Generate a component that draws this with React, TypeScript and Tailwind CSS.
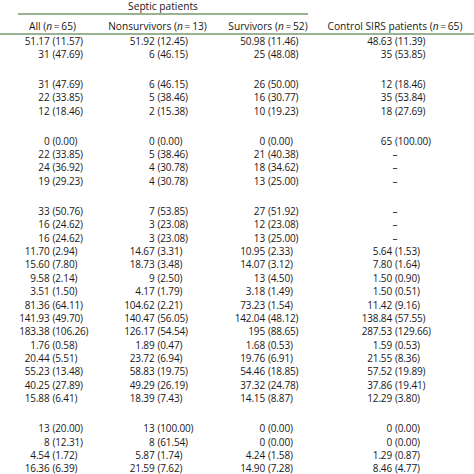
// Septic vs control SIRS patients: descriptive table, values as mean (SD) or n (%).
// Each column is aligned on the opening parenthesis, headers centre over it.

const WIDTHS = ["w-[105px]", "w-[105px]", "w-[116px]", "w-[138px]"];
const FONT = "font-['Open_Sans','Noto_Sans',sans-serif]";
const LINE = "bg-[#98b391]";

// null marks the gap before a new block of rows
const ROWS: (string[] | null)[] = [
  ["51.17 (11.57)", "51.92 (12.45)", "50.98 (11.46)", "48.63 (11.39)"],
  ["31 (47.69)", "6 (46.15)", "25 (48.08)", "35 (53.85)"],
  null,
  ["31 (47.69)", "6 (46.15)", "26 (50.00)", "12 (18.46)"],
  ["22 (33.85)", "5 (38.46)", "16 (30.77)", "35 (53.84)"],
  ["12 (18.46)", "2 (15.38)", "10 (19.23)", "18 (27.69)"],
  null,
  ["0 (0.00)", "0 (0.00)", "0 (0.00)", "65 (100.00)"],
  ["22 (33.85)", "5 (38.46)", "21 (40.38)", "–"],
  ["24 (36.92)", "4 (30.78)", "18 (34.62)", "–"],
  ["19 (29.23)", "4 (30.78)", "13 (25.00)", "–"],
  null,
  ["33 (50.76)", "7 (53.85)", "27 (51.92)", "–"],
  ["16 (24.62)", "3 (23.08)", "12 (23.08)", "–"],
  ["16 (24.62)", "3 (23.08)", "13 (25.00)", "–"],
  ["11.70 (2.94)", "14.67 (3.31)", "10.95 (2.33)", "5.64 (1.53)"],
  ["15.60 (7.80)", "18.73 (3.48)", "14.07 (3.12)", "7.80 (1.64)"],
  ["9.58 (2.14)", "9 (2.50)", "13 (4.50)", "1.50 (0.90)"],
  ["3.51 (1.50)", "4.17 (1.79)", "3.18 (1.49)", "1.50 (0.51)"],
  ["81.36 (64.11)", "104.62 (2.21)", "73.23 (1.54)", "11.42 (9.16)"],
  ["141.93 (49.70)", "140.47 (56.05)", "142.04 (48.12)", "138.84 (57.55)"],
  ["183.38 (106.26)", "126.17 (54.54)", "195 (88.65)", "287.53 (129.66)"],
  ["1.76 (0.58)", "1.89 (0.47)", "1.68 (0.53)", "1.59 (0.53)"],
  ["20.44 (5.51)", "23.72 (6.94)", "19.76 (6.91)", "21.55 (8.36)"],
  ["55.23 (13.48)", "58.83 (19.75)", "54.46 (18.85)", "57.52 (19.89)"],
  ["40.25 (27.89)", "49.29 (26.19)", "37.32 (24.78)", "37.86 (19.41)"],
  ["15.88 (6.41)", "18.39 (7.43)", "14.15 (8.87)", "12.29 (3.80)"],
  null,
  ["13 (20.00)", "13 (100.00)", "0 (0.00)", "0 (0.00)"],
  ["8 (12.31)", "8 (61.54)", "0 (0.00)", "0 (0.00)"],
  ["4.54 (1.72)", "5.87 (1.74)", "4.24 (1.58)", "1.29 (0.87)"],
  ["16.36 (6.39)", "21.59 (7.62)", "14.90 (7.28)", "8.46 (4.77)"],
];

const HEADERS: [string, string][] = [
  ["All", "65"],
  ["Nonsurvivors", "13"],
  ["Survivors", "52"],
  ["Control SIRS patients", "65"],
];

function Cell({ text, w }: { text: string; w: string }) {
  if (text === "–") {
    return <div className={`${w} shrink-0 text-center`}>–</div>;
  }
  const i = text.indexOf(" ");
  return (
    <div className={`${w} flex shrink-0`}>
      <span className="w-1/2 pr-[3px] text-right">{text.slice(0, i)}</span>
      <span className="w-1/2 text-left">{text.slice(i + 1)}</span>
    </div>
  );
}

export default function App() {
  return (
    <div className={`h-[474px] w-[474px] overflow-hidden bg-white text-[#1a1718] ${FONT}`}>
      {/* spanning header over the three septic columns */}
      <div className="flex w-[326px] flex-col">
        <div className="h-[13px] text-center text-[10.2px] leading-[13px]">Septic patients</div>
        <div className={`mx-[18px] h-[1.5px] ${LINE}`} />
      </div>

      <div className="flex h-[18.5px] items-end text-[10.2px] leading-[13px]">
        {HEADERS.map(([label, n], k) => (
          <div key={label} className={`${WIDTHS[k]} shrink-0 text-center whitespace-nowrap`}>
            {label} (<i>n</i>
            {"\u2009=\u2009"}
            {n})
          </div>
        ))}
      </div>
      <div className={`h-[1.5px] w-full ${LINE}`} />

      <div className="text-[10px] leading-[13.4px] tracking-[-0.15px]">
        {ROWS.map((row, r) =>
          row ? (
            <div key={r} className="flex h-[13.4px] whitespace-nowrap">
              {row.map((c, k) => (
                <Cell key={k} text={c} w={WIDTHS[k]} />
              ))}
            </div>
          ) : (
            <div key={r} className="h-[16.6px]" />
          )
        )}
      </div>
    </div>
  );
}
